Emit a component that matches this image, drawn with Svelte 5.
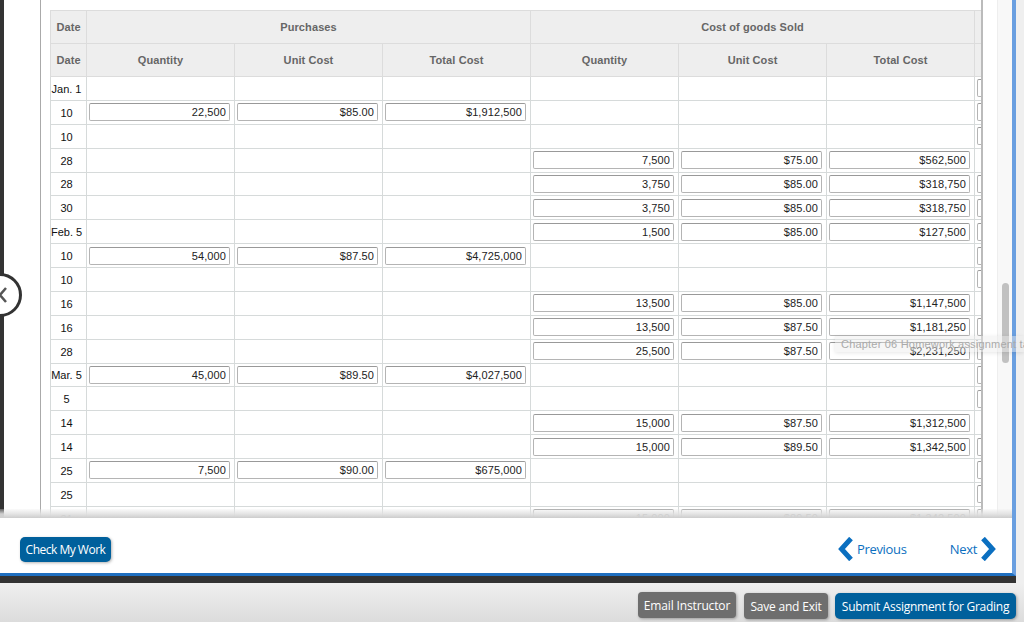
<script>
  const rows = [
    { date: 'Jan. 1', extra: true },
    { date: '10', buy: ['22,500', '$85.00', '$1,912,500'], extra: true },
    { date: '10', extra: true },
    { date: '28', sold: ['7,500', '$75.00', '$562,500'] },
    { date: '28', sold: ['3,750', '$85.00', '$318,750'], extra: true },
    { date: '30', sold: ['3,750', '$85.00', '$318,750'], extra: true },
    { date: 'Feb. 5', sold: ['1,500', '$85.00', '$127,500'], extra: true },
    { date: '10', buy: ['54,000', '$87.50', '$4,725,000'], extra: true },
    { date: '10', extra: true },
    { date: '16', sold: ['13,500', '$85.00', '$1,147,500'] },
    { date: '16', sold: ['13,500', '$87.50', '$1,181,250'], extra: true },
    { date: '28', sold: ['25,500', '$87.50', '$2,231,250'], extra: true },
    { date: 'Mar. 5', buy: ['45,000', '$89.50', '$4,027,500'], extra: true },
    { date: '5', extra: true },
    { date: '14', sold: ['15,000', '$87.50', '$1,312,500'] },
    { date: '14', sold: ['15,000', '$89.50', '$1,342,500'], extra: true },
    { date: '25', buy: ['7,500', '$90.00', '$675,000'], extra: true },
    { date: '25', extra: true },
    { date: '31', sold: ['15,000', '$89.50', '$1,342,500'], extra: true }
  ];
  const blank = ['', '', ''];
</script>

<div class="page">
  <div class="panel">
    <div class="content">
      <div class="gutter"></div>
      <div class="sheet">
        <table>
          <colgroup>
            <col class="c-date" />
            {#each Array(7) as _}
              <col class="c-num" />
            {/each}
          </colgroup>
          <thead>
            <tr>
              <th>Date</th>
              <th colspan="3">Purchases</th>
              <th colspan="3">Cost of goods Sold</th>
              <th></th>
            </tr>
            <tr>
              <th>Date</th>
              <th>Quantity</th>
              <th>Unit Cost</th>
              <th>Total Cost</th>
              <th>Quantity</th>
              <th>Unit Cost</th>
              <th>Total Cost</th>
              <th></th>
            </tr>
          </thead>
          <tbody>
            {#each rows as row}
              <tr>
                <td class="date">{row.date}</td>
                {#each row.buy || blank as value}
                  <td>{#if row.buy}<input readonly {value} />{/if}</td>
                {/each}
                {#each row.sold || blank as value}
                  <td>{#if row.sold}<input readonly {value} />{/if}</td>
                {/each}
                <td>{#if row.extra}<input readonly value="" />{/if}</td>
              </tr>
            {/each}
          </tbody>
        </table>
      </div>
      <div class="margin"></div>
      <div class="track"><div class="thumb"></div></div>
    </div>
    <div class="footer">
      <button class="check">Check My Work</button>
      <div class="pager">
        <a class="prev" href="#prev">
          <svg width="15" height="24" viewBox="0 0 15 24"><path d="M13 1.5 3.5 12l9.5 10.5" /></svg>
          Previous
        </a>
        <a class="next" href="#next">
          Next
          <svg width="15" height="24" viewBox="0 0 15 24"><path d="M2 1.5 11.5 12 2 22.5" /></svg>
        </a>
      </div>
    </div>
  </div>
  <div class="strip"></div>
  <div class="actions">
    <button class="grey email">Email Instructor</button>
    <button class="grey">Save and Exit</button>
    <button class="submit">Submit Assignment for Grading</button>
  </div>

  <div class="back">
    <svg width="9" height="18" viewBox="0 0 9 18"><path d="M7 2 1 9l6 7" /></svg>
  </div>
  <div class="tip">Chapter 06 Homework assignment ta</div>
</div>

<style>
  :global(body) {
    margin: 0;
    background: #eee;
  }

  .page {
    position: relative;
    width: 1024px;
    height: 622px;
    overflow: hidden;
    display: flex;
    flex-direction: column;
    font-family: "Liberation Sans", Arial, sans-serif;
    background: #efefef;
  }

  .panel {
    width: 1012px;
    height: 573px;
    background: #fff;
    border-right: 4px solid #6a9fe0;
    border-bottom: 3px solid #1f6fc0;
    display: flex;
    flex-direction: column;
  }

  .content {
    height: 517px;
    flex: none;
    display: flex;
    overflow: hidden;
  }

  .gutter {
    width: 36px;
    flex: none;
    border-left: 4px solid #333;
  }

  .sheet {
    width: 931px;
    flex: none;
    padding: 10px 0 0 9px;
    overflow: hidden;
    border-left: 1px solid #aaa;
    border-right: 2px solid #bbb;
  }

  table {
    border-collapse: collapse;
    table-layout: fixed;
    width: 1072px;
  }

  .c-date {
    width: 36px;
  }

  .c-num {
    width: 148px;
  }

  th {
    height: 32px;
    padding: 0;
    background: #eee;
    border: 1px solid #dcdcdc;
    color: #666;
    font-size: 11px;
    font-weight: bold;
    letter-spacing: 0.1px;
    text-align: center;
  }

  td {
    height: 22.88px;
    padding: 0 0 0 2px;
    border: 1px solid #d6dada;
    vertical-align: middle;
    line-height: 0;
  }

  td.date {
    height: 21.88px;
    padding: 1px 4px 0 0;
    font-size: 11px;
    line-height: 14px;
    color: #111;
    text-align: center;
    white-space: nowrap;
  }

  input {
    box-sizing: border-box;
    width: 141px;
    height: 18px;
    margin: 0;
    padding: 0 3px 0 0;
    border: 1px solid #b4b4b4;
    border-top-color: #999;
    border-radius: 2px;
    background: #fff;
    color: #222;
    font-family: inherit;
    font-size: 11px;
    letter-spacing: 0.1px;
    text-align: right;
    outline: none;
  }

  .margin {
    width: 14px;
    flex: none;
  }

  .track {
    width: 15px;
    flex: none;
    box-sizing: border-box;
    padding: 283px 4px 0;
    background: #f8f8f8;
    border-left: 1px solid #eee;
  }

  .thumb {
    width: 7px;
    height: 80px;
    border-radius: 4px;
    background: #c1c1c1;
  }

  .footer {
    position: relative;
    flex: 1;
    display: flex;
    align-items: center;
    justify-content: space-between;
    padding: 9px 16px 0 20px;
    background: #fff;
  }

  .footer::before {
    content: '';
    position: absolute;
    left: 0;
    right: 0;
    top: -8px;
    height: 9px;
    background: linear-gradient(rgba(238, 238, 238, 0.25), rgba(225, 225, 225, 0.9) 55%, #cfcfcf 95%, #e8e8e8);
  }

  button {
    border: none;
    color: #fff;
    font-family: "Open Sans", sans-serif;
    box-shadow: 1px 1px 3px rgba(0, 0, 0, 0.3);
    padding: 0;
  }

  .check {
    width: 91px;
    height: 25px;
    border-radius: 5px;
    background: #00609c;
    font-size: 12px;
    letter-spacing: -0.5px;
  }

  .pager {
    display: flex;
    gap: 43px;
    margin-top: -2px;
  }

  .pager a {
    display: flex;
    align-items: center;
    gap: 4px;
    color: #0b6fc0;
    font-family: "Open Sans", sans-serif;
    font-size: 13px;
    letter-spacing: -0.3px;
    text-decoration: none;
  }

  .pager svg {
    fill: none;
    stroke: #0b6fc0;
    stroke-width: 5;
  }

  .strip {
    width: 1016px;
    height: 7px;
    flex: none;
    background: #333;
  }

  .actions {
    flex: 1;
    display: flex;
    justify-content: flex-end;
    align-items: flex-start;
    gap: 7px;
    padding: 10px 8px 0 0;
    background: linear-gradient(#efefef, #dcdcdc);
  }

  .grey {
    width: 84px;
    height: 26px;
    border-radius: 4px;
    background: #6e6e6e;
    font-size: 12px;
    letter-spacing: -0.2px;
  }

  .email {
    width: 98px;
    margin-top: -1px;
    margin-right: 1px;
    letter-spacing: -0.15px;
  }

  .submit {
    width: 181px;
    height: 26px;
    border-radius: 5px;
    background: #00609c;
    font-size: 12px;
    letter-spacing: -0.27px;
  }

  .back {
    position: absolute;
    left: -22px;
    top: 273px;
    box-sizing: border-box;
    width: 44px;
    height: 44px;
    border: 3px solid #333;
    border-radius: 50%;
    background: #fff;
  }

  .back svg {
    position: absolute;
    left: 18px;
    top: 10px;
    fill: none;
    stroke: #555;
    stroke-width: 2.5;
  }

  .tip {
    position: absolute;
    left: 835px;
    top: 336px;
    width: 189px;
    height: 16px;
    box-sizing: border-box;
    padding-left: 6px;
    background: rgba(236, 236, 236, 0.45);
    box-shadow: 0 1px 4px rgba(0, 0, 0, 0.1);
    color: #aaa;
    font-size: 11px;
    line-height: 16px;
    letter-spacing: 0.2px;
    white-space: nowrap;
    overflow: hidden;
  }
</style>
